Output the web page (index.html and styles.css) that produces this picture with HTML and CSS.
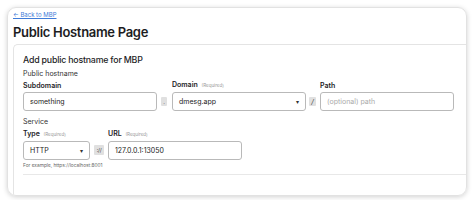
FILE: index.html
```html
<!DOCTYPE html>
<html>
<head>
  <meta charset="UTF-8">
  <title>Public Hostname Page</title>
  <link rel="stylesheet" href="styles.css">
</head>
<body>
  <div class="window">
    <a class="back-link" href="#">&larr; Back to MBP</a>
    <div class="page-title">Public Hostname Page</div>
    <div class="host-card">
      <div class="card-title">Add public hostname for MBP</div>
      <div class="section-label">Public hostname</div>
      <div class="field-row">
        <div class="field field-wide">
          <label>Subdomain</label>
          <input type="text" value="something">
        </div>
        <div class="sep sep-dot">.</div>
        <div class="field field-wide">
          <label>Domain <span class="req">(Required)</span></label>
          <div class="select">dmesg.app<span class="caret">&#9662;</span></div>
        </div>
        <div class="sep sep-slash">/</div>
        <div class="field field-wide">
          <label>Path</label>
          <input type="text" placeholder="(optional) path">
        </div>
      </div>
      <div class="section-label service-label">Service</div>
      <div class="field-row service-row">
        <div class="field field-type">
          <label>Type <span class="req">(Required)</span></label>
          <div class="select">HTTP<span class="caret">&#9662;</span></div>
        </div>
        <div class="sep sep-scheme">://</div>
        <div class="field field-wide">
          <label>URL <span class="req">(Required)</span></label>
          <input type="text" value="127.0.0.1:13050">
        </div>
      </div>
      <div class="hint">For example, https://localhost:8001</div>
      <div class="divider"></div>
    </div>
  </div>
</body>
</html>
```

FILE: styles.css
```css
body {
  margin: 0;
  padding: 7px;
  background: #fff;
  font-family: 'Inter', 'Noto Sans', sans-serif;
  color: #1d1d1f;
}
.window {
  height: 184px;
  border: 1px solid #e2e2e2;
  border-radius: 9px;
  box-shadow: 0 1px 5px rgba(0,0,0,0.18);
  overflow: hidden;
  padding: 3px 0 0 5px;
}
.back-link {
  display: block;
  font-size: 6px;
  line-height: 8px;
  color: #3f7bd8;
  text-decoration: underline;
}
.page-title {
  font-size: 13px;
  font-weight: 600;
  line-height: 18px;
  margin-top: 4px;
  letter-spacing: -0.3px;
}
.host-card {
  margin-top: 3px;
  margin-right: -20px;
  border-top: 1px solid #e4e4e4;
  border-left: 1px solid #e4e4e4;
  border-top-left-radius: 5px;
  padding: 9px 0 0 9px;
  height: 200px;
}
.card-title {
  font-size: 8.8px;
  font-weight: 500;
  line-height: 12px;
  letter-spacing: -0.2px;
}
.section-label {
  font-size: 7px;
  line-height: 9px;
  margin-top: 3px;
  color: #333;
}
.service-label {
  margin-top: 6px;
}
.field-row {
  display: flex;
  align-items: flex-end;
  margin-top: 2px;
}
.service-row {
  margin-top: 3px;
}
.field {
  display: flex;
  flex-direction: column;
}
.field label {
  font-size: 7px;
  font-weight: 600;
  line-height: 9px;
  margin-bottom: 2px;
}
.req {
  font-size: 4.5px;
  font-weight: 400;
  color: #999;
  margin-left: 2px;
}
.field-wide {
  width: 134px;
}
.field-type {
  width: 67px;
}
.field input, .select {
  box-sizing: border-box;
  height: 19px;
  border: 1px solid #b9b9b9;
  border-radius: 3px;
  font-family: inherit;
  font-size: 7px;
  padding: 0 6px;
  color: #222;
  background: #fff;
  margin: 0;
  width: 100%;
}
.field input::placeholder {
  color: #aaa;
}
.select {
  display: flex;
  align-items: center;
  justify-content: space-between;
}
.caret {
  font-size: 6px;
  color: #333;
}
.sep {
  background: #e0e0e0;
  color: #444;
  font-size: 6px;
  height: 9px;
  line-height: 9px;
  text-align: center;
  margin-bottom: 5px;
  border-radius: 1px;
}
.sep-dot {
  width: 6px;
  margin-left: 4px;
  margin-right: 5px;
}
.sep-slash {
  width: 7px;
  margin-left: 3px;
  margin-right: 4px;
  font-size: 7px;
  font-style: italic;
}
.sep-scheme {
  width: 10px;
  height: 10px;
  line-height: 10px;
  margin-left: 4px;
  margin-right: 4px;
  font-size: 5.5px;
  letter-spacing: -0.3px;
}
.hint {
  font-size: 4.8px;
  color: #666;
  line-height: 6px;
  margin-top: 2px;
}
.divider {
  border-top: 1px solid #e8e8e8;
  margin-top: 6px;
  margin-right: 12px;
}
```
